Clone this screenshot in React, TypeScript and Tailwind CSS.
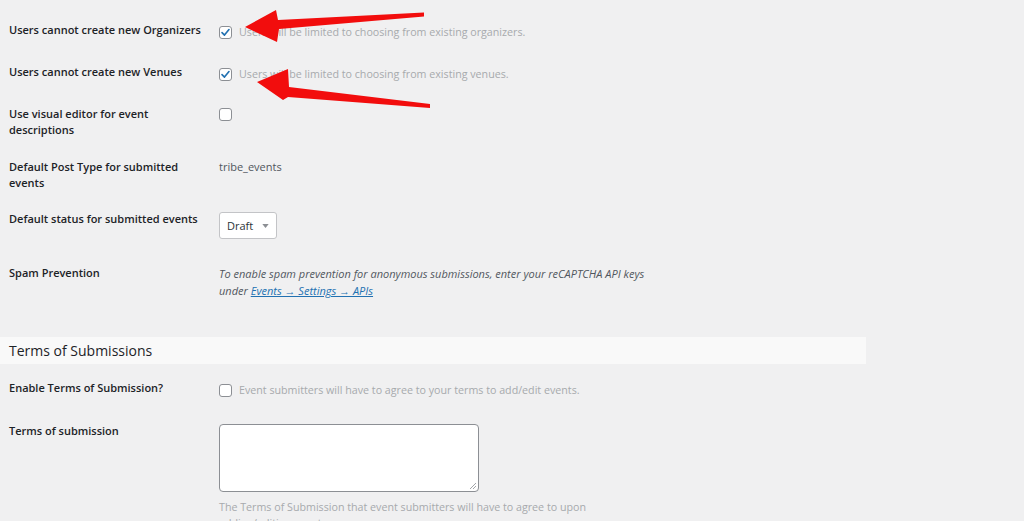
import React from 'react';

const font = { fontFamily: '"Open Sans", "Noto Sans", sans-serif' };

function Check({ checked }: { checked?: boolean }) {
  return (
    <span className="inline-flex h-[13px] w-[13px] shrink-0 items-center justify-center rounded-[3px] border border-[#8c8f94] bg-white">
      {checked && (
        <svg viewBox="0 0 12 12" className="h-[11px] w-[11px]">
          <path d="M2.2 6.2 L4.9 8.8 L9.8 2.8" fill="none" stroke="#2271b1" strokeWidth="1.8" strokeLinecap="round" strokeLinejoin="round" />
        </svg>
      )}
    </span>
  );
}

function Row({ label, h, children }: { label: React.ReactNode; h: string; children?: React.ReactNode }) {
  return (
    <div className={`flex ${h}`}>
      <div className="w-[219px] shrink-0 whitespace-nowrap pl-[9px] pr-[8px] text-[11px] font-semibold leading-4 text-[#1d2327]">{label}</div>
      <div className="flex-1 text-[11px] leading-4">{children}</div>
    </div>
  );
}

export default function App() {
  return (
    <div className="relative h-[521px] w-[1024px] overflow-hidden bg-[#f0f0f1]" style={font}>
      <div className="pt-[22px]">
        <Row label="Users cannot create new Organizers" h="h-[42px]">
          <div className="flex items-center gap-[7px] pt-[2px]">
            <Check checked />
            <span className="text-[10.7px] text-[#a7aaad]">Users will be limited to choosing from existing organizers.</span>
          </div>
        </Row>
        <Row label="Users cannot create new Venues" h="h-[42px]">
          <div className="flex items-center gap-[7px] pt-[2px]">
            <Check checked />
            <span className="text-[10.7px] text-[#a7aaad]">Users will be limited to choosing from existing venues.</span>
          </div>
        </Row>
        <Row label={<>Use visual editor for event<br />descriptions</>} h="h-[53px]">
          <div className="flex items-center pt-[2px]">
            <Check />
          </div>
        </Row>
        <Row label={<>Default Post Type for submitted<br />events</>} h="h-[52px]">
          <p className="text-[#50575e]">tribe_events</p>
        </Row>
        <Row label="Default status for submitted events" h="h-[54px]">
          <div className="mt-[1px] flex h-[27px] w-[58px] items-center justify-between rounded-[3px] border border-[#c3c4c7] bg-white pl-[7px] pr-[7px]">
            <span className="text-[#2c3338]">Draft</span>
            <svg viewBox="0 0 8 5" className="h-[4px] w-[7px]">
              <path d="M0 0 H8 L4 5 Z" fill="#8c8f94" />
            </svg>
          </div>
        </Row>
        <Row label="Spam Prevention" h="h-[72px]">
          <p className="italic leading-[17px] text-[#50575e]">
            To enable spam prevention for anonymous submissions, enter your reCAPTCHA API keys
            <br />
            under <span className="text-[#2271b1] underline">Events → Settings → APIs</span>
          </p>
        </Row>

        <div className="flex h-[27px] w-[866px] items-center bg-[#f9f9f9] pl-[9px] text-[14px] text-[#1d2327]">Terms of Submissions</div>

        <div className="pt-4">
          <Row label="Enable Terms of Submission?" h="h-[43px]">
            <div className="flex items-center gap-[7px] pt-[2px]">
              <Check />
              <span className="text-[10.7px] text-[#a7aaad]">Event submitters will have to agree to your terms to add/edit events.</span>
            </div>
          </Row>
          <Row label="Terms of submission" h="h-[100px]">
            <div className="flex flex-col">
              <div className="relative mt-[1px] h-[68px] w-[260px] rounded-[4px] border border-[#8c8f94] bg-white">
                <svg viewBox="0 0 8 8" className="absolute bottom-[1px] right-[1px] h-[8px] w-[8px]">
                  <path d="M7 1 L1 7 M7 4 L4 7" stroke="#8c8f94" strokeWidth="0.8" />
                </svg>
              </div>
              <p className="mt-[7px] text-[10.7px] text-[#a7aaad]">
                The Terms of Submission that event submitters will have to agree to upon
                <br />
                adding/editing events.
              </p>
            </div>
          </Row>
        </div>
      </div>

      {/* red annotation arrows */}
      <svg className="pointer-events-none absolute left-0 top-0" width="1024" height="521" viewBox="0 0 1024 521">
        <polygon points="245,27 276,10 278,20 424,12.5 424,16.5 279,29 277,42" fill="#f20d0d" />
        <polygon points="257,82 288,69 289,87 430,104 430,108 288,97 283,100" fill="#f20d0d" />
      </svg>
    </div>
  );
}
